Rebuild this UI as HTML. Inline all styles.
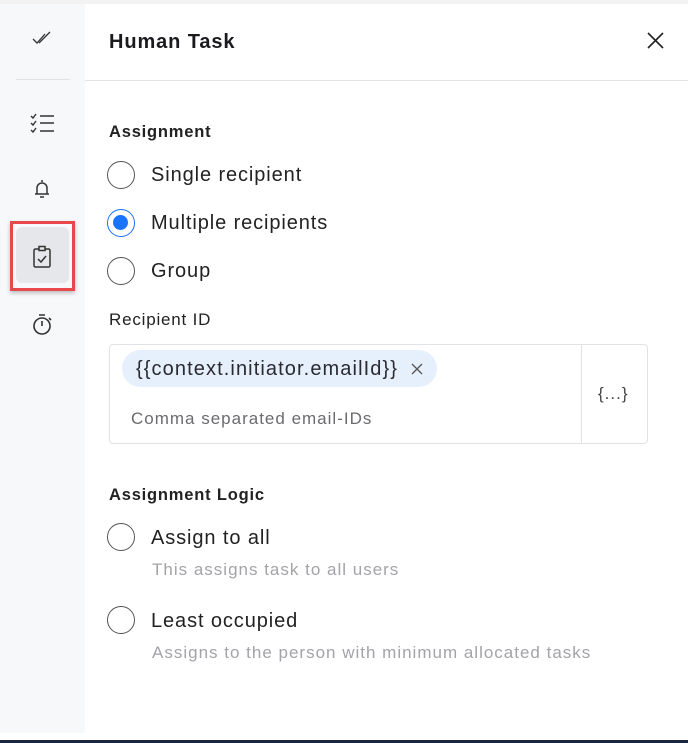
<!DOCTYPE html>
<html><head><style>
*{margin:0;padding:0;box-sizing:border-box}
body{width:688px;height:743px;position:relative;background:#fff;font-family:"Liberation Sans",sans-serif;overflow:hidden;color:#1f1f24}
.top{position:absolute;left:0;top:0;width:688px;height:4px;background:#f2f2f2}
.side{position:absolute;left:0;top:4px;width:85px;height:729px;background:#f7f8fa}
.bot{position:absolute;left:0;top:740px;width:688px;height:3px;background:#1a2540}
.ic{position:absolute}
.abs{position:absolute;white-space:nowrap}
.radio{position:absolute;width:28px;height:28px;border:1.5px solid #555;border-radius:50%;background:#fff}
.lbl{font-size:20px;color:#222;letter-spacing:.9px}
.h{font-size:16.5px;font-weight:bold;color:#222;letter-spacing:.8px}
.sub{font-size:17px;color:#a3a3a8;letter-spacing:1px}
</style></head><body>
<div class="top"></div>
<div class="side"></div>
<div class="bot"></div>
<div class="abs" style="left:16px;top:79px;width:54px;height:1px;background:#e2e2e2"></div>
<svg class="ic" style="left:30px;top:30px" width="24" height="18" viewBox="0 0 24 18" fill="none" stroke="#333" stroke-width="1.3"><path d="M3 9l4 4 8-9M9 13l11-11"/></svg>
<svg class="ic" style="left:28px;top:112px" width="28" height="22" viewBox="0 0 28 22" fill="none" stroke="#333" stroke-width="1.4"><path d="M3 4l2 2 3-4M3 11l2 2 3-4M3 18l2 2 3-4M12 4h14M12 11h14M12 19h14"/></svg>
<svg class="ic" style="left:33px;top:178px" width="18" height="22" viewBox="0 0 18 22" fill="none" stroke="#333" stroke-width="1.5"><path d="M9 2v2M4 16V10a5 5 0 0110 0v6M2 16h14M7 19h4"/></svg>
<div class="abs" style="left:10px;top:221px;width:65px;height:70px;border:3px solid #e8474c;box-shadow:0 2px 4px rgba(0,0,0,.25)"></div>
<div class="abs" style="left:16px;top:227px;width:53px;height:56px;background:#e6e7ea;border-radius:6px"></div>
<svg class="ic" style="left:32px;top:245px" width="20" height="24" viewBox="0 0 20 24" fill="none" stroke="#333" stroke-width="1.5"><rect x="2" y="4" width="16" height="18" rx="1.5"/><rect x="7" y="1.5" width="6" height="4" fill="#e6e7ea"/><path d="M6 14l3 3 5-6"/></svg>
<svg class="ic" style="left:32px;top:313px" width="22" height="24" viewBox="0 0 22 24" fill="none" stroke="#333" stroke-width="1.6"><circle cx="10" cy="13" r="8"/><path d="M7 2h6M10 13V8M17 5l2 2"/></svg>

<div class="abs" style="left:85px;top:80px;width:603px;height:1px;background:#e4e4e4"></div>
<div class="abs" style="left:109px;top:31px;font-size:20px;font-weight:bold;color:#1b1b1f;letter-spacing:.9px">Human Task</div>
<svg class="ic" style="left:647px;top:32px" width="17" height="17" viewBox="0 0 17 17" stroke="#222" stroke-width="1.6"><path d="M1 1l15 15M16 1L1 16"/></svg>

<div class="abs h" style="left:109px;top:123px">Assignment</div>
<div class="radio" style="left:107px;top:161px"></div>
<div class="abs lbl" style="left:151px;top:164px">Single recipient</div>
<div class="radio" style="left:107px;top:209px;border-color:#1a73ff"><div style="position:absolute;left:5px;top:5px;width:15px;height:15px;border-radius:50%;background:#1a73ff"></div></div>
<div class="abs lbl" style="left:151px;top:212px">Multiple recipients</div>
<div class="radio" style="left:107px;top:257px"></div>
<div class="abs lbl" style="left:151px;top:260px">Group</div>

<div class="abs" style="left:109px;top:310px;font-size:17px;color:#222;letter-spacing:.8px">Recipient ID</div>
<div class="abs" style="left:109px;top:344px;width:539px;height:100px;border:1px solid #e2e2e4;border-radius:4px"></div>
<div class="abs" style="left:581px;top:345px;width:1px;height:98px;background:#e2e2e4"></div>
<div class="abs" style="left:598px;top:384px;font-size:17px;color:#444;letter-spacing:1px">{...}</div>
<div class="abs" style="left:122px;top:350px;width:315px;height:37px;background:#e6f0fd;border-radius:19px"></div>
<div class="abs" style="left:136px;top:358px;font-size:20px;color:#2a2a30;letter-spacing:1.1px">{{context.initiator.emailId}}</div>
<svg class="ic" style="left:411px;top:363px" width="12" height="12" viewBox="0 0 12 12" stroke="#555" stroke-width="1.3"><path d="M1 1l10 10M11 1L1 11"/></svg>
<div class="abs" style="left:131px;top:409px;font-size:17px;color:#6b6b70;letter-spacing:1px">Comma separated email-IDs</div>

<div class="abs h" style="left:109px;top:486px">Assignment Logic</div>
<div class="radio" style="left:107px;top:523px"></div>
<div class="abs lbl" style="left:151px;top:527px">Assign to all</div>
<div class="abs sub" style="left:152px;top:560px">This assigns task to all users</div>
<div class="radio" style="left:107px;top:606px"></div>
<div class="abs lbl" style="left:151px;top:610px">Least occupied</div>
<div class="abs sub" style="left:152px;top:643px">Assigns to the person with minimum allocated tasks</div>
</body></html>
